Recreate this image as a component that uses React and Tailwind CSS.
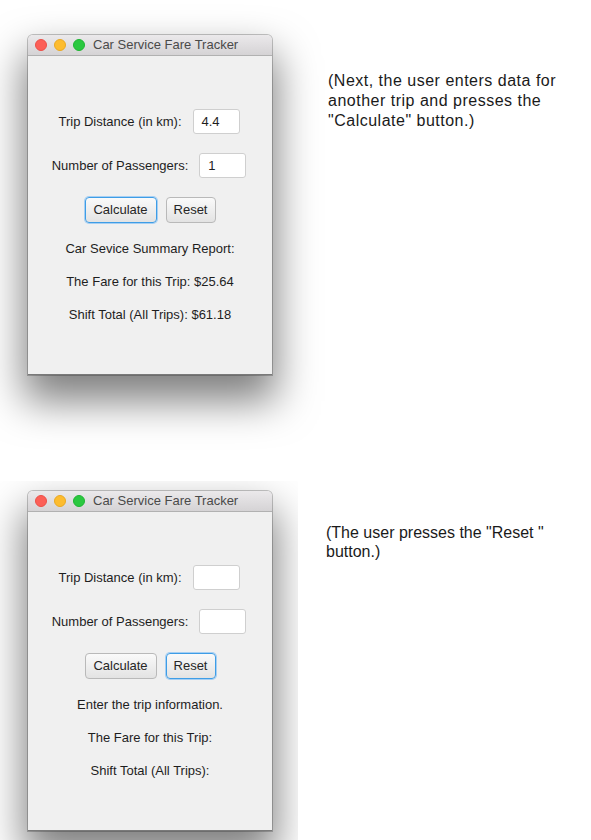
import React from 'react';

const sans = { fontFamily: '"Liberation Sans", Arial, sans-serif' };

const TrafficLights = () => (
  <div className="flex items-center gap-[7px] pl-[7px]">
    <span className="block w-[12px] h-[12px] rounded-full bg-[#fc5f57] border border-[#ec4f48]" />
    <span className="block w-[12px] h-[12px] rounded-full bg-[#fdbc2f] border border-[#eaa922]" />
    <span className="block w-[12px] h-[12px] rounded-full bg-[#2bc840] border border-[#1fb533]" />
  </div>
);

const Field = ({ value }) => (
  <div className="w-[47px] h-[25px] bg-white border border-[#cfcfcf] rounded-[3px] flex items-center pl-[8px] text-[13px] text-[#1e1e1e]">
    {value}
  </div>
);

const Button = ({ label, focused, width }) => (
  <div
    className={
      'h-[26px] flex items-center justify-center rounded-[4px] text-[13px] text-[#262626] bg-gradient-to-b from-[#fafafa] to-[#e3e3e3] ' +
      (focused
        ? 'border border-[#3e9de6] shadow-[0_0_0_1px_#a6cff3]'
        : 'border border-[#b9b9b9]')
    }
    style={{ width }}
  >
    {label}
  </div>
);

const FareWindow = ({ distance, passengers, focus, lines }) => (
  <div
    className="w-[244px] h-[340px] bg-[#f0f0f0] rounded-t-[5px] border-b border-[#7a7a7a] shadow-[0_22px_40px_4px_rgba(0,0,0,0.5),0_0_0_1px_rgba(0,0,0,0.22)] flex flex-col"
    style={sans}
  >
    <div className="h-[21px] flex items-center rounded-t-[5px] bg-gradient-to-b from-[#ebe9eb] to-[#d5d3d5] border-b border-[#b1b1b1]">
      <TrafficLights />
      <span className="ml-[8px] text-[13px] text-[#4a4a4a]">Car Service Fare Tracker</span>
    </div>
    <div className="flex flex-col items-center pt-[53px] text-[#1e1e1e] text-[13px]">
      <div className="flex items-center gap-[11px] -translate-x-[1px]">
        <span>Trip Distance (in km):</span>
        <Field value={distance} />
      </div>
      <div className="flex items-center gap-[11px] mt-[19px] -translate-x-[1px]">
        <span>Number of Passengers:</span>
        <Field value={passengers} />
      </div>
      <div className="flex items-center gap-[9px] mt-[19px]">
        <Button label="Calculate" width={72} focused={focus === 'calc'} />
        <Button label="Reset" width={50} focused={focus === 'reset'} />
      </div>
      <div className="mt-[9px] flex flex-col items-center leading-[33px]">
        {lines.map((l) => (
          <span key={l}>{l}</span>
        ))}
      </div>
    </div>
  </div>
);

export default function App() {
  return (
    <div className="bg-white w-[591px] h-[840px] overflow-hidden">
      <div className="flex pt-[35px]">
        <div className="w-[298px] pl-[28px] shrink-0">
          <FareWindow
            distance="4.4"
            passengers="1"
            focus="calc"
            lines={[
              'Car Sevice Summary Report:',
              'The Fare for this Trip: $25.64',
              'Shift Total (All Trips): $61.18',
            ]}
          />
        </div>
        <p
          className="ml-[30px] mt-[36px] text-[16px] leading-[20px] tracking-[0.5px] text-[#1a1a1a]"
          style={sans}
        >
          (Next, the user enters data for
          <br />
          another trip and presses the
          <br />
          "Calculate" button.)
        </p>
      </div>

      <div className="flex mt-[106px]">
        <div className="w-[298px] pl-[28px] pt-[10px] shrink-0 overflow-hidden pb-[40px]">
          <FareWindow
            distance=""
            passengers=""
            focus="reset"
            lines={[
              'Enter the trip information.',
              'The Fare for this Trip:',
              'Shift Total (All Trips):',
            ]}
          />
        </div>
        <p
          className="ml-[28px] mt-[42px] text-[16px] leading-[19px] text-[#1a1a1a]"
          style={sans}
        >
          (The user presses the "Reset "
          <br />
          button.)
        </p>
      </div>
    </div>
  );
}
